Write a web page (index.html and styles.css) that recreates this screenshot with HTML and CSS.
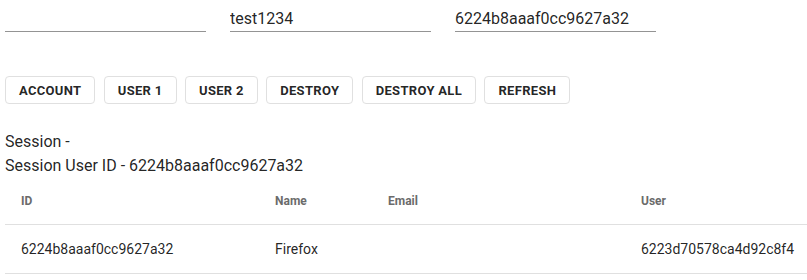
FILE: index.html
```html
<!DOCTYPE html>
<html>
<head>
<meta charset="utf-8">
<link rel="stylesheet" href="styles.css">
</head>
<body>
<div class="page">
  <div class="fields">
    <div class="field"><input class="input" type="text" value=""></div>
    <div class="field"><input class="input" type="text" value="test1234"></div>
    <div class="field"><input class="input" type="text" value="6224b8aaaf0cc9627a32"></div>
  </div>
  <div class="actions">
    <button class="btn">Account</button>
    <button class="btn">User 1</button>
    <button class="btn">User 2</button>
    <button class="btn">Destroy</button>
    <button class="btn">Destroy All</button>
    <button class="btn">Refresh</button>
  </div>
  <div class="session">
    <div>Session -</div>
    <div>Session User ID - 6224b8aaaf0cc9627a32</div>
  </div>
  <table class="table">
    <colgroup>
      <col class="c-id"><col class="c-name"><col class="c-email"><col class="c-user">
    </colgroup>
    <thead>
      <tr><th>ID</th><th>Name</th><th>Email</th><th>User</th></tr>
    </thead>
    <tbody>
      <tr><td>6224b8aaaf0cc9627a32</td><td>Firefox</td><td></td><td>6223d70578ca4d92c8f4</td></tr>
    </tbody>
  </table>
</div>
</body>
</html>
```
FILE: styles.css
```css
html, body {
  margin: 0;
  padding: 0;
  background: #fff;
  overflow: hidden;
}
body {
  font-family: Roboto, "Liberation Sans", sans-serif;
  color: rgba(0, 0, 0, 0.87);
}
.page {
  padding-left: 5px;
}
.fields {
  display: flex;
  gap: 24px;
  padding-top: 5px;
}
.field {
  width: 201px;
  border-bottom: 1px solid #949494;
}
.input {
  display: block;
  width: 100%;
  box-sizing: border-box;
  border: 0;
  outline: none;
  padding: 0;
  height: 26px;
  font-family: inherit;
  font-size: 16px;
  color: rgba(0, 0, 0, 0.87);
  background: transparent;
}
.actions {
  display: flex;
  gap: 8.5px;
  margin-top: 44px;
}
.btn {
  box-sizing: border-box;
  height: 28px;
  padding: 0 13px;
  border: 1px solid #e0e0e0;
  border-radius: 4px;
  background: #fff;
  font-family: inherit;
  font-size: 13px;
  font-weight: 700;
  letter-spacing: 0.3px;
  text-transform: uppercase;
  color: rgba(0, 0, 0, 0.87);
}
.session {
  margin-top: 26px;
  font-size: 16px;
  line-height: 24px;
}
.table {
  width: 802px;
  border-collapse: collapse;
  table-layout: fixed;
}
.c-id { width: 254px; }
.c-name { width: 113px; }
.c-email { width: 253px; }
.table th, .table td {
  text-align: left;
  padding: 12px 16px;
  line-height: 24px;
  border-bottom: 1px solid #e0e0e0;
  white-space: nowrap;
}
.table th {
  padding-top: 11px;
  padding-bottom: 11px;
  font-size: 12px;
  font-weight: 700;
  color: #6b6b6b;
}
.table td {
  font-size: 14px;
  color: rgba(0, 0, 0, 0.87);
}
```
